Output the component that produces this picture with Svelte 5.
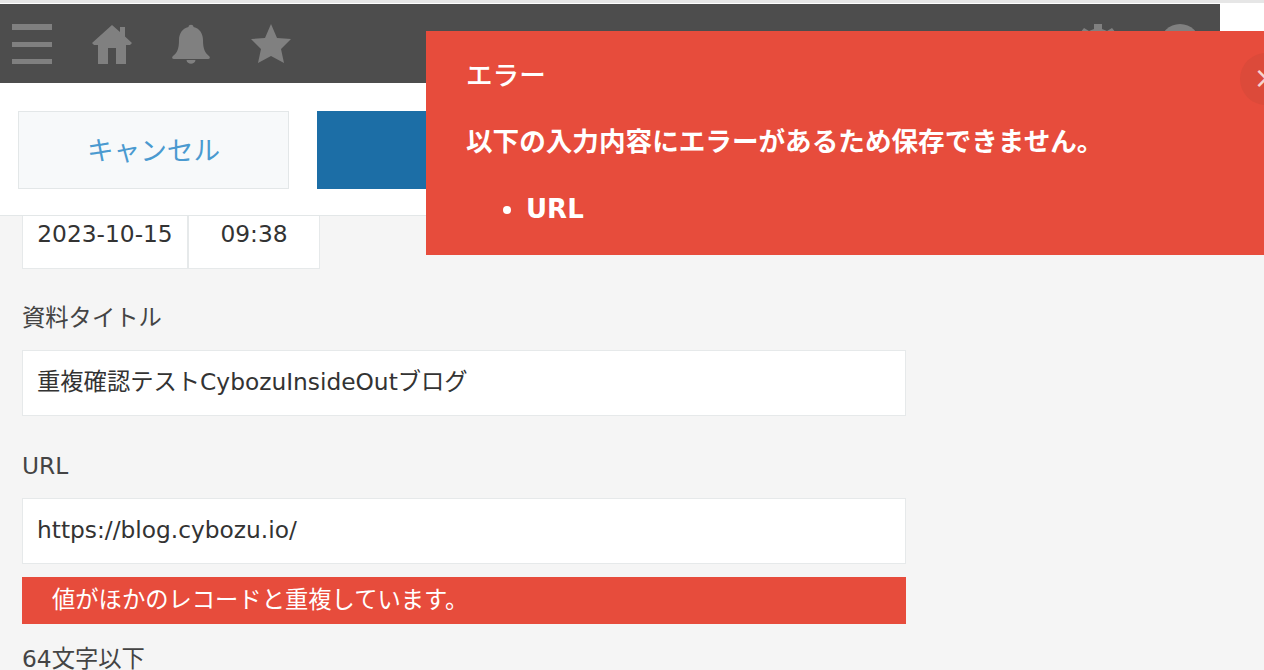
<script>
	let fields = [
		{ label: '資料タイトル', value: '重複確認テストCybozuInsideOutブログ' },
		{ label: 'URL', value: 'https://blog.cybozu.io/', error: '値がほかのレコードと重複しています。', note: '64文字以下' }
	];
</script>

<div class="page">
	<div class="topbar">
		<div class="header">
			<div class="header-left">
				<svg class="icon" width="40" height="40" viewBox="0 0 40 40">
					<path d="M0 0h40v6H0zM0 18h40v5H0zM0 35h40v5H0z" />
				</svg>
				<svg class="icon" width="40" height="40" viewBox="0 0 40 40">
					<path d="M20 1 L28 8 V3 H33 V12.5 L40 19 L38 21 H34 V40 H24 V24 H16 V40 H6 V21 H2 L0 19 Z" />
				</svg>
				<svg class="icon" width="40" height="40" viewBox="0 0 40 40">
					<path d="M17.5 3 C17.5 0 22.5 0 22.5 3 C29 4.500 32 10 32 16 C32 25 34 29 38 32 C39.500 33.500 39 35 37 35 H3 C1 35 .5 33.500 2 32 C6 29 8 25 8 16 C8 10 11 4.500 17.500 3 Z M15.500 36 H24.500 C24 41 16 41 15.500 36 Z" />
				</svg>
				<svg class="icon" width="40" height="40" viewBox="0 0 40 40">
					<path d="M20 0 L26 14 L40 15 L30 25 L33 39 L20 32 L7 39 L10 25 L0 15 L14 14 Z" />
				</svg>
			</div>
			<div class="header-right">
				<svg class="icon" width="40" height="40" viewBox="0 0 40 40">
					<path d="M16 0h8v5l5 2 5-3 4 5-3 4 2 4h3v7h-3l-2 5 3 4-4 5-5-3-5 2v5h-8v-5l-5-2-5 3-4-5 3-4-2-5H0v-7h3l2-4-3-4 4-5 5 3 5-2z" />
				</svg>
				<svg class="icon" width="40" height="40" viewBox="0 0 40 40">
					<circle cx="20" cy="20" r="20" />
				</svg>
			</div>
		</div>
	</div>

	<div class="toolbar">
		<button class="btn cancel">キャンセル</button>
		<button class="btn save">保存</button>
	</div>

	<div class="form">
		<div class="datetime">
			<div class="box date">2023-10-15</div>
			<div class="box time">09:38</div>
		</div>

		{#each fields as field}
			<div class="field">
				<div class="label">{field.label}</div>
				<div class="box input">{field.value}</div>
				{#if field.error}
					<div class="field-error">{field.error}</div>
				{/if}
				{#if field.note}
					<div class="label note">{field.note}</div>
				{/if}
			</div>
		{/each}
	</div>

	<div class="notification">
		<div class="title">エラー</div>
		<p class="message">以下の入力内容にエラーがあるため保存できません。</p>
		<ul>
			<li>URL</li>
		</ul>
		<div class="close">×</div>
	</div>
</div>

<style>
	:global(body) {
		margin: 0;
		background: #f5f5f5;
	}

	.page {
		position: relative;
		height: 670px;
		overflow: hidden;
		background: #f5f5f5;
		color: #333;
		font-family: 'DejaVu Sans', 'Noto Sans CJK JP', sans-serif;
		font-size: 23.300px;
	}

	.topbar {
		padding-top: 4px;
		background: #fff;
		box-shadow: inset 0 3px 0 #e6e6e6;
	}

	.header {
		width: 1220px;
		height: 79px;
		box-sizing: border-box;
		padding: 0 20px 0 12px;
		display: flex;
		justify-content: space-between;
		align-items: center;
		background: #4d4d4d;
	}

	.header-left {
		display: flex;
		gap: 39.500px;
	}

	.header-right {
		display: flex;
		gap: 42px;
	}

	.icon {
		display: block;
		fill: #808080;
		overflow: visible;
	}

	.toolbar {
		height: 133px;
		box-sizing: border-box;
		padding: 28px 18px 0;
		display: flex;
		align-items: flex-start;
		gap: 28px;
		background: #fff;
		border-bottom: 1px solid #e3e7e8;
	}

	.btn {
		width: 271px;
		height: 78px;
		font: inherit;
		font-size: 26.600px;
		padding: 0 0 4px;
	}

	.cancel {
		background: #f7f9fa;
		border: 1px solid #e3e7e8;
		color: #4a9ad0;
	}

	.save {
		background: #1c6ea6;
		border: 1px solid #1c6ea6;
		color: #fff;
	}

	.form {
		padding: 0 22px;
	}

	.datetime {
		display: flex;
		margin-bottom: 33px;
	}

	.box {
		box-sizing: border-box;
		background: #fff;
		border: 1px solid #e6e9ea;
		color: #333;
	}

	.date,
	.time {
		height: 53px;
		border-top: 0;
		text-align: center;
		line-height: 36px;
	}

	.date {
		width: 166px;
	}

	.time {
		width: 132px;
	}

	.field {
		width: 884px;
		margin-bottom: 34px;
	}

	.label {
		height: 32px;
		line-height: 32px;
		margin-bottom: 16px;
		color: #444;
	}

	.input {
		height: 66px;
		line-height: 61px;
		padding-left: 14px;
	}

	.field-error {
		margin-top: 13px;
		height: 47px;
		line-height: 46px;
		padding-left: 30px;
		background: #e74c3c;
		color: #fff;
	}

	.note {
		margin-top: 19px;
	}

	.notification {
		position: absolute;
		left: 426px;
		top: 31px;
		width: 838px;
		height: 224px;
		box-sizing: border-box;
		padding: 28px 40px;
		background: #e74c3c;
		color: #fff;
		font-size: 26.600px;
		font-weight: 700;
	}

	.title {
		font-weight: 500;
		line-height: 34px;
	}

	.message {
		margin: 32px 0 0;
		line-height: 34px;
	}

	ul {
		margin: 33px 0 0;
		padding-left: 60px;
		line-height: 34px;
		font-size: 26px;
	}

	.close {
		position: absolute;
		left: 814px;
		top: 22px;
		width: 52px;
		height: 52px;
		border-radius: 50%;
		background: #dc4a3a;
		text-align: center;
		line-height: 50px;
		font-size: 30px;
		font-weight: 400;
		color: #f6d4cf;
	}
</style>
